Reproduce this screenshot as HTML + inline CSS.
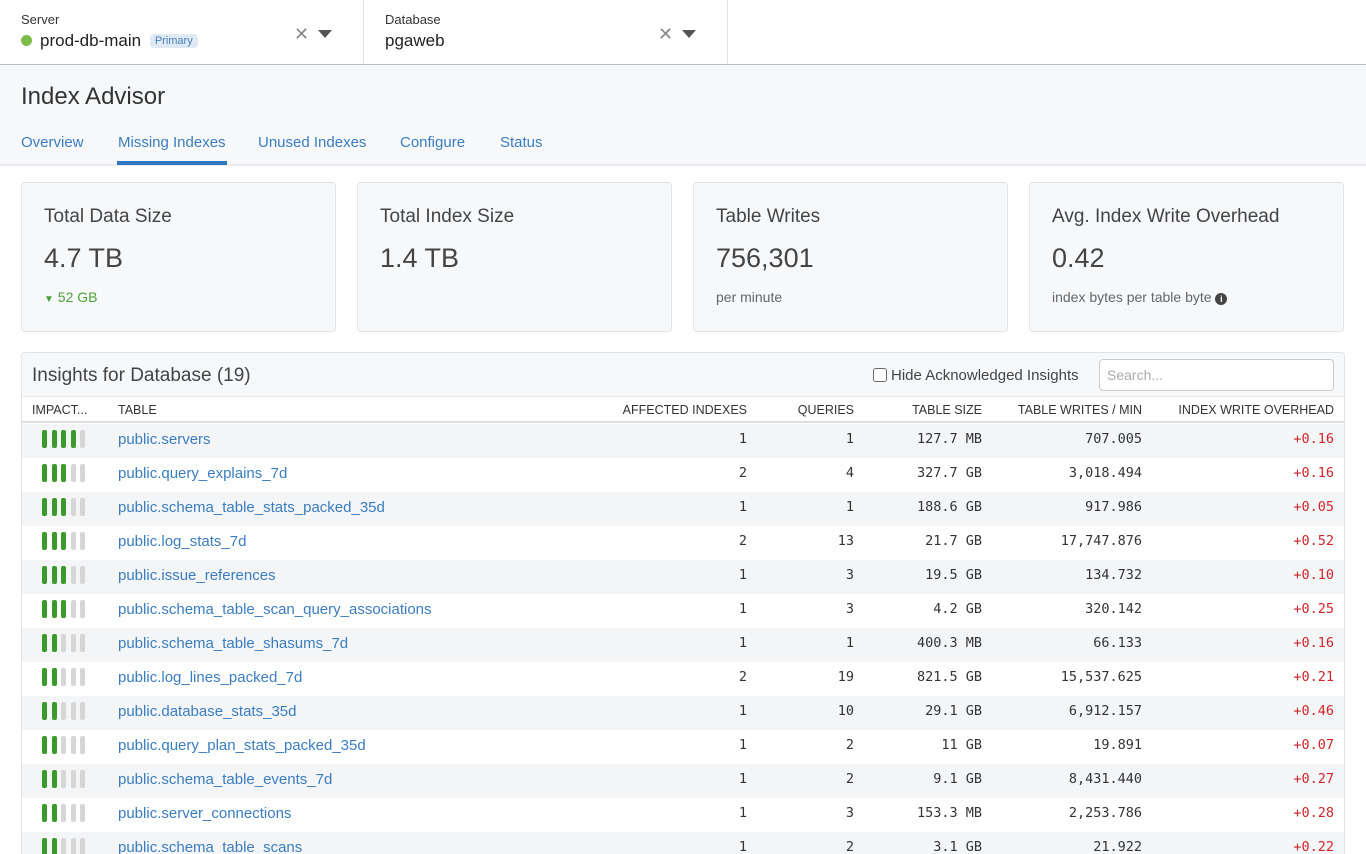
<!DOCTYPE html>
<html><head><meta charset="utf-8"><style>
*{box-sizing:border-box;margin:0;padding:0}
html,body{width:1366px;height:854px;overflow:hidden}
body{font-family:"Liberation Sans",sans-serif;color:#333;background:#fff;position:relative}
.top{position:absolute;left:0;top:0;width:1366px;height:65px;background:#fff;border-bottom:1px solid #bbb}
.sel{position:absolute;top:0;height:64px;border-right:1px solid #e3e3e3}
.lbl{position:absolute;left:21px;top:12px;font-size:13px;color:#333}
.val{position:absolute;left:21px;top:31px;font-size:17px;color:#222}
.x{position:absolute;top:24px;font-size:18px;color:#888}
.tri{position:absolute;top:30px;width:0;height:0;border-left:7px solid transparent;border-right:7px solid transparent;border-top:8px solid #555}
.hdr{position:absolute;left:0;top:65px;width:1366px;height:101px;background:#f6f8fa;border-bottom:2px solid #e8eaee}
h1{position:absolute;left:21px;top:18px;font-size:24px;font-weight:normal;color:#333}
.tab{position:absolute;top:69px;font-size:15px;color:#3a7dc0}
.card{position:absolute;top:182px;width:315px;height:150px;background:#f7f8fa;border:1px solid #e1e3e6;border-radius:4px}
.card .t{position:absolute;left:22px;top:23px;font-size:19px;color:#444}
.card .v{position:absolute;left:22px;top:60px;font-size:27px;color:#444}
.card .s{position:absolute;left:22px;top:106px;font-size:14px;color:#666}
.panel{position:absolute;left:21px;top:352px;width:1324px;height:520px;border:1px solid #e1e3e6;border-radius:4px;overflow:hidden}
.ph{position:absolute;left:0;top:0;width:100%;height:44px;background:#f6f8fa;border-bottom:1px solid #e6e8eb}
.ph .tt{position:absolute;left:10px;top:12px;font-size:19px;color:#444}
.cb{position:absolute;left:851px;top:15px;width:14px;height:14px;border:1px solid #666;border-radius:3px;background:#fff}
.cbl{position:absolute;left:869px;top:14px;font-size:15px;color:#444}
.search{position:absolute;left:1077px;top:6px;width:235px;height:32px;border:1px solid #ccc;border-radius:4px;background:#fff;font-size:14px;color:#aaa;padding:7px 7px}
.th{position:absolute;top:44px;left:0;width:100%;height:26px;border-bottom:2px solid #dcdfe3;font-size:12.5px;color:#333}
.th span,.row span{position:absolute;white-space:nowrap}
.row{position:absolute;left:0;width:100%;height:34px;font-size:14px}
.row:nth-child(odd){background:#f4f5f7}
.r{text-align:right}
.mono{font-family:"DejaVu Sans Mono","Liberation Mono",monospace;font-size:13.5px;color:#333}
.lnk{color:#3a7dc0;font-size:15px}
.bars{position:absolute;left:20px;top:6px}
.bars i{display:inline-block;width:5px;height:18px;border-radius:2px;background:#d6d6d6;margin-right:4.5px;vertical-align:top}
.bars i.g{background:#3c9a2c}
.red{color:#d0262b}
</style></head><body>
<div class="top">
 <div class="sel" style="left:0;width:364px">
  <div class="lbl">Server</div>
  <div class="val"><span style="display:inline-block;width:11px;height:11px;border-radius:50%;background:#7dbb4a;margin-right:8px;vertical-align:0"></span>prod-db-main <span style="font-size:11px;color:#4a80b8;background:#dfe9f3;border-radius:4px;padding:1px 5px;vertical-align:2px;margin-left:4px">Primary</span></div>
  <div class="x" style="left:294px">✕</div><div class="tri" style="left:318px"></div>
 </div>
 <div class="sel" style="left:364px;width:364px">
  <div class="lbl">Database</div>
  <div class="val">pgaweb</div>
  <div class="x" style="left:294px">✕</div><div class="tri" style="left:318px"></div>
 </div>
</div>
<div class="hdr">
 <h1>Index Advisor</h1>
 <div class="tab" style="left:21px">Overview</div>
 <div class="tab" style="left:118px">Missing Indexes</div>
 <div style="position:absolute;left:117px;top:96px;width:110px;height:4px;background:#2f78bd"></div>
 <div class="tab" style="left:258px">Unused Indexes</div>
 <div class="tab" style="left:400px">Configure</div>
 <div class="tab" style="left:500px">Status</div>
</div>
<div class="card" style="left:21px"><div class="t">Total Data Size</div><div class="v">4.7 TB</div><div class="s" style="color:#4aa23a"><span style="font-size:10px">▼</span> 52 GB</div></div>
<div class="card" style="left:357px"><div class="t">Total Index Size</div><div class="v">1.4 TB</div></div>
<div class="card" style="left:693px"><div class="t">Table Writes</div><div class="v">756,301</div><div class="s">per minute</div></div>
<div class="card" style="left:1029px"><div class="t">Avg. Index Write Overhead</div><div class="v">0.42</div><div class="s">index bytes per table byte <span style="display:inline-block;width:12px;height:12px;border-radius:50%;background:#444;color:#fff;font-size:9px;text-align:center;line-height:12px;font-weight:bold">i</span></div></div>
<div class="panel">
 <div class="ph"><div class="tt">Insights for Database (19)</div><div class="cb"></div><div class="cbl">Hide Acknowledged Insights</div><div class="search">Search...</div></div>
 <div class="th">
  <span style="left:10px;top:6px">IMPACT...</span><span style="left:96px;top:6px">TABLE</span>
  <span class="r" style="right:597px;top:6px">AFFECTED INDEXES</span>
  <span class="r" style="right:490px;top:6px">QUERIES</span>
  <span class="r" style="right:362px;top:6px">TABLE SIZE</span>
  <span class="r" style="right:202px;top:6px">TABLE WRITES / MIN</span>
  <span class="r" style="right:10px;top:6px">INDEX WRITE OVERHEAD</span>
 </div>
 <div style="position:absolute;left:0;top:71px;width:100%">
 </div>
</div>
<script>
var d=[[4,"public.servers",1,1,"127.7 MB","707.005","+0.16"],[3,"public.query_explains_7d",2,4,"327.7 GB","3,018.494","+0.16"],[3,"public.schema_table_stats_packed_35d",1,1,"188.6 GB","917.986","+0.05"],[3,"public.log_stats_7d",2,13,"21.7 GB","17,747.876","+0.52"],[3,"public.issue_references",1,3,"19.5 GB","134.732","+0.10"],[3,"public.schema_table_scan_query_associations",1,3,"4.2 GB","320.142","+0.25"],[2,"public.schema_table_shasums_7d",1,1,"400.3 MB","66.133","+0.16"],[2,"public.log_lines_packed_7d",2,19,"821.5 GB","15,537.625","+0.21"],[2,"public.database_stats_35d",1,10,"29.1 GB","6,912.157","+0.46"],[2,"public.query_plan_stats_packed_35d",1,2,"11 GB","19.891","+0.07"],[2,"public.schema_table_events_7d",1,2,"9.1 GB","8,431.440","+0.27"],[2,"public.server_connections",1,3,"153.3 MB","2,253.786","+0.28"],[2,"public.schema_table_scans",1,2,"3.1 GB","21.922","+0.22"]];
var c=document.querySelector('.panel>div:last-child'),h='';
d.forEach(function(r,i){var b='';for(var k=0;k<5;k++)b+='<i'+(k<r[0]?' class="g"':'')+'></i>';
h+='<div class="row" style="top:'+(i*34)+'px"><div class="bars">'+b+'</div><span class="lnk" style="left:96px;top:7px">'+r[1]+'</span><span class="mono r" style="right:597px;top:7px">'+r[2]+'</span><span class="mono r" style="right:490px;top:7px">'+r[3]+'</span><span class="mono r" style="right:362px;top:7px">'+r[4]+'</span><span class="mono r" style="right:202px;top:7px">'+r[5]+'</span><span class="mono r red" style="right:10px;top:7px">'+r[6]+'</span></div>';});
c.innerHTML=h;
</script>
</body></html>
